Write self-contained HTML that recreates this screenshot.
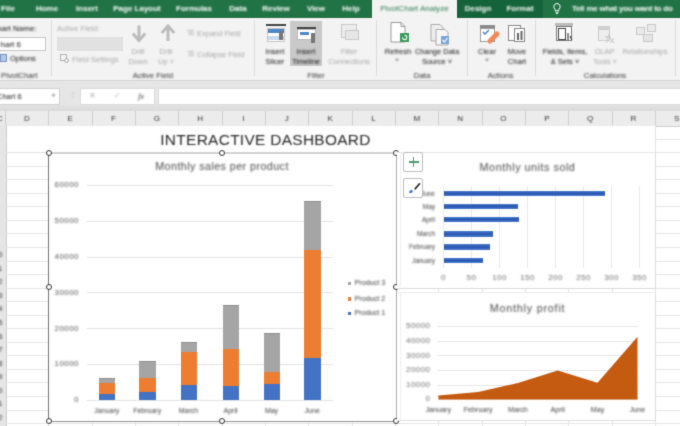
<!DOCTYPE html>
<html><head><meta charset="utf-8"><title>Dashboard</title>
<style>
*{margin:0;padding:0;box-sizing:border-box}
html,body{width:680px;height:426px;overflow:hidden;background:#fff}
body{font-family:"Liberation Sans",sans-serif;position:relative}
#root{position:absolute;left:0;top:0;width:680px;height:426px;overflow:hidden;filter:url(#b1)}
.a{position:absolute}
.t{position:absolute;white-space:nowrap;line-height:1;filter:url(#b2)}
.c{transform:translateX(-50%)}
.r{transform:translateX(-100%)}
.tab{color:#fff;font-size:8px;font-weight:bold;top:5px}
.rb{font-size:7.5px;color:#111}
.rg{font-size:7.5px;color:#a8a8a8}
.gl{font-size:7.8px;color:#333}
.ch{font-size:8px;color:#333;top:114.5px;filter:url(#b3)}
.ax{font-size:6.5px;color:#3a3a3a}
.dg{font-size:8px;color:#6c6c6c;letter-spacing:0.45px}
.sep{position:absolute;top:20px;height:56px;width:1px;background:#dcdcdc}
.hd{position:absolute;width:6px;height:6px;border:1px solid #333;border-radius:50%;background:#fff}
</style></head><body>
<svg width="0" height="0" style="position:absolute"><defs>
<filter id="b1" x="0" y="0" width="100%" height="100%" color-interpolation-filters="sRGB"><feConvolveMatrix order="3" kernelMatrix="0.01917 0.10012 0.01917 0.10012 0.52283 0.10012 0.01917 0.10012 0.01917" edgeMode="duplicate" preserveAlpha="false"/></filter>
<filter id="b2" x="-20%" y="-60%" width="140%" height="220%" color-interpolation-filters="sRGB"><feConvolveMatrix order="5" kernelMatrix="0.00087 0.00695 0.01388 0.00695 0.00087 0.00695 0.05540 0.11068 0.05540 0.00695 0.01388 0.11068 0.22111 0.11068 0.01388 0.00695 0.05540 0.11068 0.05540 0.00695 0.00087 0.00695 0.01388 0.00695 0.00087" edgeMode="none" preserveAlpha="false"/></filter>
<filter id="b3" x="-5%" y="-30%" width="110%" height="160%" color-interpolation-filters="sRGB"><feConvolveMatrix order="3" kernelMatrix="0.02768 0.11101 0.02768 0.11101 0.44521 0.11101 0.02768 0.11101 0.02768" edgeMode="none" preserveAlpha="false"/></filter>
</defs></svg>
<div id="root">

<div class="a" style="left:0;top:0;width:680px;height:17.5px;background:#217346"></div>
<div class="a" style="left:457px;top:0;width:86px;height:17.5px;background:#14633a"></div>
<div class="a" style="left:372px;top:0px;width:85px;height:18px;background:#f3f3f3"></div>
<div class="t c tab" style="left:8px">File</div>
<div class="t c tab" style="left:47px">Home</div>
<div class="t c tab" style="left:87px">Insert</div>
<div class="t c tab" style="left:137px">Page Layout</div>
<div class="t c tab" style="left:194px">Formulas</div>
<div class="t c tab" style="left:238px">Data</div>
<div class="t c tab" style="left:276px">Review</div>
<div class="t c tab" style="left:316px">View</div>
<div class="t c tab" style="left:351px">Help</div>
<div class="t c tab" style="left:478px">Design</div>
<div class="t c tab" style="left:520px">Format</div>
<div class="t c" style="left:414.5px;top:4.5px;font-size:8.1px;color:#2b7a50">PivotChart Analyze</div>
<div class="t tab" style="left:572px;letter-spacing:-0.2px">Tell me what you want to do</div>
<svg class="a" style="left:551px;top:2px" width="12" height="13" viewBox="0 0 12 13"><path d="M6 1.5a3.2 3.2 0 0 0-1.8 5.8v1.5h3.6V7.3A3.2 3.2 0 0 0 6 1.5z" fill="none" stroke="#fff" stroke-width="1"/><path d="M4.5 10.3h3M5 11.6h2" stroke="#fff" stroke-width="0.9"/></svg>
<div class="a" style="left:0;top:17.5px;width:680px;height:63.5px;background:#f3f3f3"></div>
<div class="a" style="left:0;top:80px;width:680px;height:1px;background:#d4d4d4"></div>
<div class="a" style="left:0;top:81px;width:680px;height:27px;background:#e6e6e6"></div>
<div class="sep" style="left:51px"></div>
<div class="sep" style="left:254px"></div>
<div class="sep" style="left:376px"></div>
<div class="sep" style="left:467px"></div>
<div class="sep" style="left:535px"></div>
<div class="sep" style="left:675px"></div>
<div class="t rb" style="left:-3px;top:24.5px;font-size:8px">hart Name:</div>
<div class="a" style="left:-2px;top:37px;width:48px;height:14px;background:#fff;border:1px solid #c6c6c6"></div>
<div class="t rb" style="left:0.5px;top:40.5px;font-size:8px">hart 6</div>
<div class="a" style="left:0;top:54px;width:7px;height:8px;background:#b4c8e8;border:1px solid #7a96c0"></div>
<div class="t rb" style="left:10px;top:55px">Options</div>
<div class="t gl" style="left:1px;top:72px">PivotChart</div>
<div class="t rg" style="left:57px;top:24.5px;font-size:7.8px">Active Field:</div>
<div class="a" style="left:57px;top:37px;width:66px;height:14px;background:#e1e1e1"></div>
<div class="a" style="left:60px;top:54px;width:7px;height:7px;border:1px solid #b5b5b5"></div><div class="a" style="left:64px;top:58px;width:5px;height:5px;border:1px solid #aaa;border-radius:50%;background:#eee"></div>
<div class="t rg" style="left:72px;top:56px;font-size:7.7px">Field Settings</div>
<svg class="a" style="left:131px;top:22.5px" width="16" height="20" viewBox="0 0 16 20"><path d="M8 2.500v13M1.800 10.500l6.200 7 6.200-7" fill="none" stroke="#bcbcbc" stroke-width="3"/></svg>
<svg class="a" style="left:159.500px;top:22.500px" width="16" height="20" viewBox="0 0 16 20"><path d="M8 18V5M1.800 10l6.200-7 6.200 7" fill="none" stroke="#bcbcbc" stroke-width="3"/></svg>
<div class="t c rg" style="left:138px;top:47.6px">Drill</div><div class="t c rg" style="left:138px;top:58px">Down</div>
<div class="t c rg" style="left:166px;top:47.6px">Drill</div><div class="t c rg" style="left:166px;top:58px">Up ˅</div>
<div class="t rg" style="left:186px;top:29px;font-size:7px">⁺☰</div><div class="t rg" style="left:197px;top:30px">Expand Field</div>
<div class="t rg" style="left:186px;top:49.5px;font-size:7px">⁻☰</div><div class="t rg" style="left:197px;top:50.5px">Collapse Field</div>
<div class="t c gl" style="left:153px;top:72px">Active Field</div>
<div class="a" style="left:290px;top:21px;width:32px;height:45px;background:#c9c9c9"></div>
<div class="a" style="left:266px;top:24px;width:20px;height:2px;background:#444"></div><div class="a" style="left:267px;top:28px;width:18px;height:14px;background:#fff;border:1px solid #c5c5c5"></div><div class="a" style="left:268px;top:29px;width:16px;height:4px;background:#4d86c9"></div><div class="a" style="left:268px;top:36px;width:16px;height:4px;background:#c5d9f0"></div><div class="a" style="left:279px;top:31px;width:4px;height:9px;background:#777"></div>
<div class="t c rb" style="left:275px;top:47.6px">Insert</div><div class="t c rb" style="left:275px;top:58px">Slicer</div>
<div class="a" style="left:297px;top:26.5px;width:19px;height:2px;background:#444"></div><div class="a" style="left:297px;top:29px;width:19px;height:11px;background:#fff;border:1px solid #bbb"></div><div class="a" style="left:300px;top:31.5px;width:9px;height:3px;background:#4d86c9"></div><div class="a" style="left:310.5px;top:33px;width:4px;height:10px;background:#777"></div>
<div class="t c rb" style="left:306px;top:47.6px">Insert</div><div class="t c rb" style="left:306px;top:58px">Timeline</div>
<div class="a" style="left:341px;top:24px;width:16px;height:14px;border:1px solid #c9c9c9;background:#ececec"></div><div class="a" style="left:345px;top:30px;width:14px;height:10px;border:1px solid #c9c9c9;background:#e6e6e6"></div>
<div class="t c rg" style="left:349px;top:47.6px">Filter</div><div class="t c rg" style="left:349px;top:58px">Connections</div>
<div class="t c gl" style="left:316px;top:72px">Filter</div>
<svg class="a" style="left:389px;top:21px" width="22" height="24" viewBox="0 0 22 24"><path d="M2 1.5h10l4 4V21H2z" fill="#fff" stroke="#9a9a9a" stroke-width="1"/><path d="M12 1.5v4h4" fill="none" stroke="#9a9a9a"/><rect x="11" y="12" width="9" height="9" fill="#3b9a5c"/><path d="M13.5 16.5a2.2 2.2 0 1 0 2-2.3" fill="none" stroke="#fff" stroke-width="1.1"/></svg>
<div class="t c rb" style="left:398px;top:47.6px">Refresh</div><div class="t c rb" style="left:397px;top:57px;font-size:6px">˅</div>
<svg class="a" style="left:428.5px;top:22.5px" width="24" height="24" viewBox="0 0 24 24"><path d="M2 1.5h9l3 3V18H2z" fill="#eee" stroke="#aaa" stroke-width="1"/><path d="M7 6.5h9l3 3V22H7z" fill="#f6f6f6" stroke="#aaa" stroke-width="1"/><rect x="12" y="13" width="8" height="8" fill="#7aa6d8"/><path d="M13.5 17l2 2 3-4" fill="none" stroke="#fff" stroke-width="1.1"/></svg>
<div class="t c rb" style="left:437px;top:47.6px">Change Data</div><div class="t c rb" style="left:437px;top:58px">Source ˅</div>
<div class="t c gl" style="left:422px;top:72px">Data</div>
<svg class="a" style="left:477.5px;top:23px" width="24" height="24" viewBox="0 0 24 24"><rect x="2" y="2" width="15" height="3" fill="#8a8a8a"/><rect x="2.5" y="5.500" width="14" height="13" fill="#fff" stroke="#999"/><path d="M5 9l2 2 4-4" stroke="#3f7fd0" stroke-width="1.4" fill="none"/><path d="M12 18l7-7" stroke="#f08a5a" stroke-width="5" stroke-linecap="round"/></svg>
<div class="t c rb" style="left:487px;top:47.6px">Clear</div><div class="t c rb" style="left:487px;top:57px;font-size:6px">˅</div>
<svg class="a" style="left:505.5px;top:22px" width="22" height="24" viewBox="0 0 22 24"><rect x="2.500" y="3.500" width="12" height="15" fill="#fff" stroke="#888"/><rect x="8.500" y="6.500" width="10" height="13" fill="#fff" stroke="#888"/><rect x="11" y="11" width="2" height="7" fill="#666"/><rect x="14.500" y="9" width="2" height="9" fill="#666"/></svg>
<div class="t c rb" style="left:517px;top:47.6px">Move</div><div class="t c rb" style="left:517px;top:58px">Chart</div>
<div class="t c gl" style="left:500.5px;top:72px">Actions</div>
<svg class="a" style="left:553px;top:21px" width="24" height="24" viewBox="0 0 24 24"><rect x="2" y="2" width="18" height="3" fill="#bbb"/><rect x="3.500" y="5.500" width="15" height="14" fill="#fff" stroke="#777"/><rect x="5.500" y="7.500" width="7" height="11" fill="#fff" stroke="#444"/><path d="M15 12v7M17 15l2 4" stroke="#444" stroke-width="1.2"/></svg>
<div class="t c rb" style="left:565px;top:47.6px">Fields, Items,</div><div class="t c rb" style="left:565px;top:58px">&amp; Sets ˅</div>
<svg class="a" style="left:594.5px;top:22.5px" width="22" height="24" viewBox="0 0 22 24"><rect x="3" y="3" width="12" height="3" fill="#d0d0d0"/><rect x="3.500" y="6.500" width="11" height="11" fill="#eee" stroke="#ccc"/><path d="M11 20c2-1 2-9 4-10M10 14h6M15 15l4 5M19 15l-4 5" stroke="#c4c4c4" stroke-width="1" fill="none"/></svg>
<div class="t c rg" style="left:604.5px;top:47.6px">OLAP</div><div class="t c rg" style="left:605px;top:58px">Tools ˅</div>
<div class="a" style="left:636px;top:27px;width:9px;height:8px;border:1px solid #c9c9c9;background:#eaeaea"></div><div class="a" style="left:647px;top:24px;width:9px;height:8px;border:1px solid #c9c9c9;background:#eaeaea"></div><div class="a" style="left:643px;top:34px;width:10px;height:8px;border:1px solid #c9c9c9;background:#e4e4e4"></div>
<div class="t c rg" style="left:645px;top:47.6px">Relationships</div>
<div class="t c gl" style="left:605px;top:72px">Calculations</div>
<div class="a" style="left:-2px;top:88px;width:62px;height:17px;background:#fff;border:1px solid #d0d0d0"></div>
<div class="t rb" style="left:-3px;top:93px">Chart 6</div><div class="t" style="left:51px;top:93px;font-size:5px;color:#666">▼</div>
<div class="t" style="left:69px;top:91px;font-size:8px;color:#aaa">⋮</div>
<div class="a" style="left:80px;top:88px;width:75px;height:17px;background:#fff;border:1px solid #dcdcdc"></div>
<div class="t" style="left:89px;top:92px;font-size:8px;color:#b0b0b0">✕</div><div class="t" style="left:114px;top:92px;font-size:8px;color:#b0b0b0">✓</div><div class="t" style="left:138px;top:92px;font-size:8.5px;color:#444;font-style:italic;font-family:'Liberation Serif',serif">fx</div>
<div class="a" style="left:158px;top:88px;width:524px;height:17px;background:#fff;border:1px solid #dcdcdc"></div>
<div class="a" style="left:0;top:105px;width:680px;height:6px;background:linear-gradient(#e2e2e2,#dadada)"></div>
<div class="a" style="left:0;top:110.5px;width:680px;height:16px;background:#ececec;border-bottom:1px solid #d0d0d0"></div>
<div class="t c ch" style="left:26.8px">D</div>
<div class="a" style="left:5.0px;top:111px;width:1px;height:14.5px;background:#cfcfcf"></div>
<div class="t c ch" style="left:70.1px">E</div>
<div class="a" style="left:48.3px;top:111px;width:1px;height:14.5px;background:#cfcfcf"></div>
<div class="t c ch" style="left:113.5px">F</div>
<div class="a" style="left:91.7px;top:111px;width:1px;height:14.5px;background:#cfcfcf"></div>
<div class="t c ch" style="left:156.8px">G</div>
<div class="a" style="left:135.0px;top:111px;width:1px;height:14.5px;background:#cfcfcf"></div>
<div class="t c ch" style="left:200.1px">H</div>
<div class="a" style="left:178.3px;top:111px;width:1px;height:14.5px;background:#cfcfcf"></div>
<div class="t c ch" style="left:243.4px">I</div>
<div class="a" style="left:221.6px;top:111px;width:1px;height:14.5px;background:#cfcfcf"></div>
<div class="t c ch" style="left:286.8px">J</div>
<div class="a" style="left:265.0px;top:111px;width:1px;height:14.5px;background:#cfcfcf"></div>
<div class="t c ch" style="left:330.1px">K</div>
<div class="a" style="left:308.3px;top:111px;width:1px;height:14.5px;background:#cfcfcf"></div>
<div class="t c ch" style="left:373.4px">L</div>
<div class="a" style="left:351.6px;top:111px;width:1px;height:14.5px;background:#cfcfcf"></div>
<div class="t c ch" style="left:416.8px">M</div>
<div class="a" style="left:395.0px;top:111px;width:1px;height:14.5px;background:#cfcfcf"></div>
<div class="t c ch" style="left:460.1px">N</div>
<div class="a" style="left:438.3px;top:111px;width:1px;height:14.5px;background:#cfcfcf"></div>
<div class="t c ch" style="left:503.4px">O</div>
<div class="a" style="left:481.6px;top:111px;width:1px;height:14.5px;background:#cfcfcf"></div>
<div class="t c ch" style="left:546.8px">P</div>
<div class="a" style="left:525.0px;top:111px;width:1px;height:14.5px;background:#cfcfcf"></div>
<div class="t c ch" style="left:590.1px">Q</div>
<div class="a" style="left:568.3px;top:111px;width:1px;height:14.5px;background:#cfcfcf"></div>
<div class="t c ch" style="left:633.4px">R</div>
<div class="a" style="left:611.6px;top:111px;width:1px;height:14.5px;background:#cfcfcf"></div>
<div class="t c ch" style="left:676.7px">S</div>
<div class="a" style="left:654.9px;top:111px;width:1px;height:14.5px;background:#cfcfcf"></div>
<div class="t ch" style="left:-3px">C</div>
<div class="a" style="left:0;top:125px;width:7px;height:301px;background:#e6e6e6;border-right:1px solid #cfcfcf"></div>
<div class="a" style="left:5.0px;top:125px;width:1px;height:301px;background:#e4e4e4"></div>
<div class="a" style="left:48.3px;top:125px;width:1px;height:301px;background:#e4e4e4"></div>
<div class="a" style="left:91.7px;top:125px;width:1px;height:301px;background:#e4e4e4"></div>
<div class="a" style="left:135.0px;top:125px;width:1px;height:301px;background:#e4e4e4"></div>
<div class="a" style="left:178.3px;top:125px;width:1px;height:301px;background:#e4e4e4"></div>
<div class="a" style="left:221.6px;top:125px;width:1px;height:301px;background:#e4e4e4"></div>
<div class="a" style="left:265.0px;top:125px;width:1px;height:301px;background:#e4e4e4"></div>
<div class="a" style="left:308.3px;top:125px;width:1px;height:301px;background:#e4e4e4"></div>
<div class="a" style="left:351.6px;top:125px;width:1px;height:301px;background:#e4e4e4"></div>
<div class="a" style="left:395.0px;top:125px;width:1px;height:301px;background:#e4e4e4"></div>
<div class="a" style="left:438.3px;top:125px;width:1px;height:301px;background:#e4e4e4"></div>
<div class="a" style="left:481.6px;top:125px;width:1px;height:301px;background:#e4e4e4"></div>
<div class="a" style="left:525.0px;top:125px;width:1px;height:301px;background:#e4e4e4"></div>
<div class="a" style="left:568.3px;top:125px;width:1px;height:301px;background:#e4e4e4"></div>
<div class="a" style="left:611.6px;top:125px;width:1px;height:301px;background:#e4e4e4"></div>
<div class="a" style="left:654.9px;top:125px;width:1px;height:301px;background:#e4e4e4"></div>
<div class="a" style="left:0;top:138.6px;width:680px;height:1px;background:#e4e4e4"></div>
<div class="a" style="left:0;top:152.1px;width:680px;height:1px;background:#e4e4e4"></div>
<div class="a" style="left:0;top:165.7px;width:680px;height:1px;background:#e4e4e4"></div>
<div class="a" style="left:0;top:179.2px;width:680px;height:1px;background:#e4e4e4"></div>
<div class="a" style="left:0;top:192.8px;width:680px;height:1px;background:#e4e4e4"></div>
<div class="a" style="left:0;top:206.3px;width:680px;height:1px;background:#e4e4e4"></div>
<div class="a" style="left:0;top:219.9px;width:680px;height:1px;background:#e4e4e4"></div>
<div class="a" style="left:0;top:233.4px;width:680px;height:1px;background:#e4e4e4"></div>
<div class="a" style="left:0;top:246.9px;width:680px;height:1px;background:#e4e4e4"></div>
<div class="a" style="left:0;top:260.5px;width:680px;height:1px;background:#e4e4e4"></div>
<div class="a" style="left:0;top:274.1px;width:680px;height:1px;background:#e4e4e4"></div>
<div class="a" style="left:0;top:287.6px;width:680px;height:1px;background:#e4e4e4"></div>
<div class="a" style="left:0;top:301.1px;width:680px;height:1px;background:#e4e4e4"></div>
<div class="a" style="left:0;top:314.7px;width:680px;height:1px;background:#e4e4e4"></div>
<div class="a" style="left:0;top:328.2px;width:680px;height:1px;background:#e4e4e4"></div>
<div class="a" style="left:0;top:341.8px;width:680px;height:1px;background:#e4e4e4"></div>
<div class="a" style="left:0;top:355.4px;width:680px;height:1px;background:#e4e4e4"></div>
<div class="a" style="left:0;top:368.9px;width:680px;height:1px;background:#e4e4e4"></div>
<div class="a" style="left:0;top:382.4px;width:680px;height:1px;background:#e4e4e4"></div>
<div class="a" style="left:0;top:396.0px;width:680px;height:1px;background:#e4e4e4"></div>
<div class="a" style="left:0;top:409.6px;width:680px;height:1px;background:#e4e4e4"></div>
<div class="a" style="left:0;top:423.1px;width:680px;height:1px;background:#e4e4e4"></div>
<div class="t c" style="left:-1.8px;top:251.2px;font-size:7.5px;color:#333">10</div>
<div class="t c" style="left:-1.8px;top:264.8px;font-size:7.5px;color:#333">11</div>
<div class="t c" style="left:-1.8px;top:278.3px;font-size:7.5px;color:#333">12</div>
<div class="t c" style="left:-1.8px;top:291.9px;font-size:7.5px;color:#333">13</div>
<div class="t c" style="left:-1.8px;top:305.4px;font-size:7.5px;color:#333">14</div>
<div class="t c" style="left:-1.8px;top:319.0px;font-size:7.5px;color:#333">15</div>
<div class="t c" style="left:-1.8px;top:332.5px;font-size:7.5px;color:#333">16</div>
<div class="t c" style="left:-1.8px;top:346.1px;font-size:7.5px;color:#333">17</div>
<div class="t c" style="left:-1.8px;top:359.6px;font-size:7.5px;color:#333">18</div>
<div class="t c" style="left:-1.8px;top:373.2px;font-size:7.5px;color:#333">19</div>
<div class="t c" style="left:-1.8px;top:386.7px;font-size:7.5px;color:#333">20</div>
<div class="t c" style="left:-1.8px;top:400.3px;font-size:7.5px;color:#333">21</div>
<div class="t c" style="left:-1.8px;top:413.8px;font-size:7.5px;color:#333">22</div>
<div class="t c" style="left:-1.8px;top:427.4px;font-size:7.5px;color:#333">23</div>
<div class="a" style="left:7px;top:126px;width:647.5px;height:26px;background:#fff"></div>
<div class="t c" id="ttl" style="filter:url(#b3);left:265.5px;top:131.7px;font-size:15.4px;color:#222;letter-spacing:0.33px">INTERACTIVE DASHBOARD</div>
<div class="a" style="left:48.1px;top:151.6px;width:348.5px;height:270.8px;background:#fff;border-left:1.4px solid #747474;border-top:2.2px solid #d2d2d2;border-right:1px solid #acacac;border-bottom:1.1px solid #939393"></div>
<div class="t c" style="left:222px;top:161px;font-size:10.8px;letter-spacing:0.4px;color:#484848">Monthly sales per product</div>
<div class="a" style="left:87px;top:399.7px;width:246px;height:1px;background:#e3e3e3"></div>
<div class="t r dg" style="left:79px;top:396.2px;color:#555">0</div>
<div class="a" style="left:87px;top:363.9px;width:246px;height:1px;background:#e3e3e3"></div>
<div class="t r dg" style="left:79px;top:360.4px;color:#555">10000</div>
<div class="a" style="left:87px;top:328.1px;width:246px;height:1px;background:#e3e3e3"></div>
<div class="t r dg" style="left:79px;top:324.6px;color:#555">20000</div>
<div class="a" style="left:87px;top:292.3px;width:246px;height:1px;background:#e3e3e3"></div>
<div class="t r dg" style="left:79px;top:288.8px;color:#555">30000</div>
<div class="a" style="left:87px;top:256.5px;width:246px;height:1px;background:#e3e3e3"></div>
<div class="t r dg" style="left:79px;top:253.0px;color:#555">40000</div>
<div class="a" style="left:87px;top:220.7px;width:246px;height:1px;background:#e3e3e3"></div>
<div class="t r dg" style="left:79px;top:217.2px;color:#555">50000</div>
<div class="a" style="left:87px;top:184.9px;width:246px;height:1px;background:#e3e3e3"></div>
<div class="t r dg" style="left:79px;top:181.4px;color:#555">60000</div>
<div class="a" style="left:98.5px;top:378px;width:16.5px;height:5px;background:#a5a5a5;border-top:0.8px solid #8e8e8e"></div>
<div class="a" style="left:98.5px;top:383px;width:16.5px;height:10.5px;background:#ed7d31"></div>
<div class="a" style="left:98.5px;top:393.5px;width:16.5px;height:6.699999999999989px;background:#4472c4"></div>
<div class="t c ax" style="left:106.8px;top:407.2px;font-size:7px">January</div>
<div class="a" style="left:138.6px;top:361px;width:17.200000000000017px;height:17px;background:#a5a5a5;border-top:0.8px solid #8e8e8e"></div>
<div class="a" style="left:138.6px;top:378px;width:17.200000000000017px;height:14.300000000000011px;background:#ed7d31"></div>
<div class="a" style="left:138.6px;top:392.3px;width:17.200000000000017px;height:7.899999999999977px;background:#4472c4"></div>
<div class="t c ax" style="left:147.2px;top:407.2px;font-size:7px">February</div>
<div class="a" style="left:180.5px;top:342px;width:16.0px;height:10px;background:#a5a5a5;border-top:0.8px solid #8e8e8e"></div>
<div class="a" style="left:180.5px;top:352px;width:16.0px;height:33px;background:#ed7d31"></div>
<div class="a" style="left:180.5px;top:385px;width:16.0px;height:15.199999999999989px;background:#4472c4"></div>
<div class="t c ax" style="left:188.5px;top:407.2px;font-size:7px">March</div>
<div class="a" style="left:222.5px;top:305px;width:16.0px;height:43.5px;background:#a5a5a5;border-top:0.8px solid #8e8e8e"></div>
<div class="a" style="left:222.5px;top:348.5px;width:16.0px;height:37.0px;background:#ed7d31"></div>
<div class="a" style="left:222.5px;top:385.5px;width:16.0px;height:14.699999999999989px;background:#4472c4"></div>
<div class="t c ax" style="left:230.5px;top:407.2px;font-size:7px">April</div>
<div class="a" style="left:263.5px;top:332.5px;width:16.0px;height:39.5px;background:#a5a5a5;border-top:0.8px solid #8e8e8e"></div>
<div class="a" style="left:263.5px;top:372px;width:16.0px;height:11.5px;background:#ed7d31"></div>
<div class="a" style="left:263.5px;top:383.5px;width:16.0px;height:16.69999999999999px;background:#4472c4"></div>
<div class="t c ax" style="left:271.5px;top:407.2px;font-size:7px">May</div>
<div class="a" style="left:304px;top:201px;width:16.5px;height:49px;background:#a5a5a5;border-top:0.8px solid #8e8e8e"></div>
<div class="a" style="left:304px;top:250px;width:16.5px;height:107.5px;background:#ed7d31"></div>
<div class="a" style="left:304px;top:357.5px;width:16.5px;height:42.69999999999999px;background:#4472c4"></div>
<div class="t c ax" style="left:312.2px;top:407.2px;font-size:7px">June</div>
<div class="a" style="left:347.5px;top:281.5px;width:3.5px;height:3.5px;background:#a5a5a5"></div>
<div class="t ax" style="left:354.5px;top:279.3px;font-size:7.2px">Product 3</div>
<div class="a" style="left:347.5px;top:297.0px;width:3.5px;height:3.5px;background:#ed7d31"></div>
<div class="t ax" style="left:354.5px;top:294.8px;font-size:7.2px">Product 2</div>
<div class="a" style="left:347.5px;top:311.5px;width:3.5px;height:3.5px;background:#4472c4"></div>
<div class="t ax" style="left:354.5px;top:309.3px;font-size:7.2px">Product 1</div>
<div class="hd" style="left:45.7px;top:149.8px"></div>
<div class="hd" style="left:219.2px;top:149.8px"></div>
<div class="hd" style="left:392.7px;top:149.8px"></div>
<div class="hd" style="left:45.7px;top:283.8px"></div>
<div class="hd" style="left:392.7px;top:283.8px"></div>
<div class="hd" style="left:45.7px;top:417.8px"></div>
<div class="hd" style="left:219.2px;top:417.8px"></div>
<div class="hd" style="left:392.7px;top:417.8px"></div>
<div class="a" style="left:397px;top:152px;width:258.5px;height:136.5px;background:#fff;border-top:1px solid #e6e6e6;border-right:1px solid #dedede;border-bottom:1.5px solid #dcdcdc"></div>
<div class="t c" style="left:527.5px;top:162px;font-size:10.8px;letter-spacing:0.52px;color:#484848">Monthly units sold</div>
<div class="a" style="left:443.0px;top:186px;width:1px;height:82px;background:#e9e9e9"></div>
<div class="t c dg" style="left:443.5px;top:273.5px">0</div>
<div class="a" style="left:471.0px;top:186px;width:1px;height:82px;background:#e9e9e9"></div>
<div class="t c dg" style="left:471.5px;top:273.5px">50</div>
<div class="a" style="left:499.0px;top:186px;width:1px;height:82px;background:#e9e9e9"></div>
<div class="t c dg" style="left:499.5px;top:273.5px">100</div>
<div class="a" style="left:527.0px;top:186px;width:1px;height:82px;background:#e9e9e9"></div>
<div class="t c dg" style="left:527.5px;top:273.5px">150</div>
<div class="a" style="left:555.0px;top:186px;width:1px;height:82px;background:#e9e9e9"></div>
<div class="t c dg" style="left:555.5px;top:273.5px">200</div>
<div class="a" style="left:583.0px;top:186px;width:1px;height:82px;background:#e9e9e9"></div>
<div class="t c dg" style="left:583.5px;top:273.5px">250</div>
<div class="a" style="left:611.0px;top:186px;width:1px;height:82px;background:#e9e9e9"></div>
<div class="t c dg" style="left:611.5px;top:273.5px">300</div>
<div class="a" style="left:639.0px;top:186px;width:1px;height:82px;background:#e9e9e9"></div>
<div class="t c dg" style="left:639.5px;top:273.5px">350</div>
<div class="a" style="left:443.5px;top:190.8px;width:161.5px;height:5.4px;background:linear-gradient(#4f7dcc,#2553b2 50%,#4f7dcc)"></div>
<div class="t r ax" style="left:435px;top:190.5px">June</div>
<div class="a" style="left:443.5px;top:203.8px;width:74.0px;height:5.4px;background:linear-gradient(#4f7dcc,#2553b2 50%,#4f7dcc)"></div>
<div class="t r ax" style="left:435px;top:203.5px">May</div>
<div class="a" style="left:443.5px;top:216.8px;width:75.0px;height:5.4px;background:linear-gradient(#4f7dcc,#2553b2 50%,#4f7dcc)"></div>
<div class="t r ax" style="left:435px;top:216.5px">April</div>
<div class="a" style="left:443.5px;top:231.3px;width:49.0px;height:5.4px;background:linear-gradient(#4f7dcc,#2553b2 50%,#4f7dcc)"></div>
<div class="t r ax" style="left:435px;top:231px">March</div>
<div class="a" style="left:443.5px;top:244.3px;width:46.5px;height:5.4px;background:linear-gradient(#4f7dcc,#2553b2 50%,#4f7dcc)"></div>
<div class="t r ax" style="left:435px;top:244px">February</div>
<div class="a" style="left:443.5px;top:257.8px;width:39.0px;height:5.4px;background:linear-gradient(#4f7dcc,#2553b2 50%,#4f7dcc)"></div>
<div class="t r ax" style="left:435px;top:257.5px">January</div>
<div class="a" style="left:400px;top:153px;width:1px;height:134px;background:#efefef"></div>
<div class="a" style="left:403px;top:152px;width:20px;height:19.5px;background:#fff;border:1px solid #bdbdbd;border-radius:2px"></div>
<div class="a" style="left:408.5px;top:161.3px;width:10.5px;height:1.4px;background:#4c9a6e"></div><div class="a" style="left:413.1px;top:156.8px;width:1.4px;height:10.4px;background:#4c9a6e"></div>
<div class="a" style="left:403px;top:177.5px;width:20px;height:20px;background:#fff;border:1px solid #bdbdbd;border-radius:2px"></div>
<svg class="a" style="left:403.5px;top:177.5px" width="20" height="20" viewBox="0 0 20 20"><path d="M11.2 10.800l4.300-5" stroke="#222" stroke-width="1.700" stroke-linecap="round"/><path d="M5 14.800c0.300-2.300 2-3.300 3.200-2.600 1.200 0.800 0.600 2-0.400 2.500-0.900 0.400-2.200 0.400-2.800 0.100z" fill="#3f78c8"/></svg>
<div class="a" style="left:397px;top:292px;width:258.5px;height:129px;background:#fff;border-top:1px solid #ececec;border-right:1px solid #dedede;border-bottom:1px solid #dedede"></div>
<div class="t c" style="left:527.5px;top:302.6px;font-size:10.8px;letter-spacing:0.78px;color:#484848">Monthly profit</div>
<div class="a" style="left:400px;top:293px;width:1px;height:127px;background:#efefef"></div>
<div class="a" style="left:438px;top:399.1px;width:200px;height:1px;background:#e6e6e6"></div>
<div class="t r dg" style="left:430.5px;top:395.4px">0</div>
<div class="a" style="left:438px;top:384.5px;width:200px;height:1px;background:#e6e6e6"></div>
<div class="t r dg" style="left:430.5px;top:380.8px">10000</div>
<div class="a" style="left:438px;top:369.8px;width:200px;height:1px;background:#e6e6e6"></div>
<div class="t r dg" style="left:430.5px;top:366.1px">20000</div>
<div class="a" style="left:438px;top:355.2px;width:200px;height:1px;background:#e6e6e6"></div>
<div class="t r dg" style="left:430.5px;top:351.5px">30000</div>
<div class="a" style="left:438px;top:340.5px;width:200px;height:1px;background:#e6e6e6"></div>
<div class="t r dg" style="left:430.5px;top:336.8px">40000</div>
<div class="a" style="left:438px;top:325.9px;width:200px;height:1px;background:#e6e6e6"></div>
<div class="t r dg" style="left:430.5px;top:322.2px">50000</div>
<svg class="a" style="left:400px;top:291px" width="255" height="129"><polygon points="38.3,104.5 78.1,101.0 117.9,92.0 157.7,79.5 197.5,91.8 237.5,45.7 237.5,108.60000000000002 38.5,108.60000000000002" fill="#c55a11"/></svg>
<div class="t c ax" style="left:438.3px;top:406.3px;font-size:7.2px">January</div>
<div class="t c ax" style="left:478.1px;top:406.3px;font-size:7.2px">February</div>
<div class="t c ax" style="left:517.9px;top:406.3px;font-size:7.2px">March</div>
<div class="t c ax" style="left:557.7px;top:406.3px;font-size:7.2px">April</div>
<div class="t c ax" style="left:597.5px;top:406.3px;font-size:7.2px">May</div>
<div class="t c ax" style="left:637.5px;top:406.3px;font-size:7.2px">June</div>
</div></body></html>
